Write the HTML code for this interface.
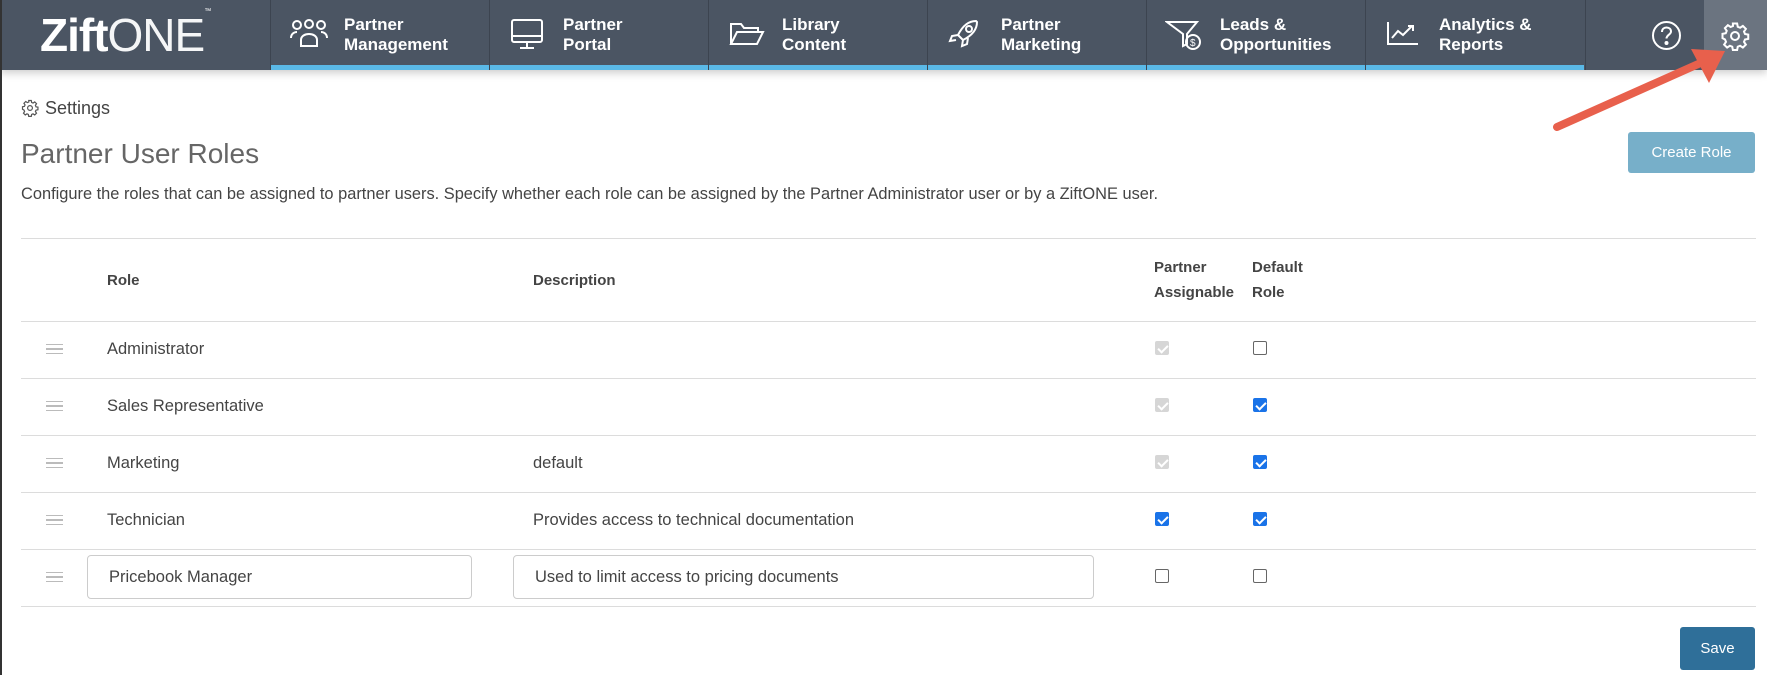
<!DOCTYPE html>
<html><head><meta charset="utf-8"><style>
*{box-sizing:border-box;margin:0;padding:0}
body{width:1767px;height:675px;overflow:hidden;background:#fff;font-family:"Liberation Sans",sans-serif;color:#444;position:relative}
.left{position:absolute;left:0;top:0;width:2px;height:675px;background:#333}
.nav{position:absolute;left:0;top:0;width:1767px;height:70px;background:#4b5563;box-shadow:0 3px 8px rgba(0,0,0,.2)}
.logo{position:absolute;left:40px;top:8px;color:#fff;font-size:46px;letter-spacing:-1px}
.logo b{font-weight:bold}.logo span{font-weight:normal;font-family:"Liberation Sans Narrow","Liberation Sans",sans-serif;opacity:.95}
.item{position:absolute;top:0;height:70px;width:219px;border-left:1px solid #3c4450;color:#fff}
.item .bar{position:absolute;left:0;right:0;bottom:0;height:5px;background:#5ab8e6}
.item .t{position:absolute;left:73px;top:15px;font-size:17px;font-weight:bold;line-height:20px}
.item svg{position:absolute;left:18px;top:18px}
.gear{position:absolute;left:1704px;top:0;width:63px;height:70px;background:#6b7480}
.abs{position:absolute}
.hr{position:absolute;left:21px;width:1735px;height:1px;background:#dcdcdc}
.cell{position:absolute;font-size:16.5px;color:#444}
.drag{position:absolute;left:46px;width:17px;height:10px;border-top:1.5px solid #bbb;border-bottom:1.5px solid #bbb}
.drag:after{content:"";position:absolute;left:0;right:0;top:3px;height:1.5px;background:#bbb}
.cb{position:absolute;width:14px;height:14px;border:1px solid #666;border-radius:2px;background:#fff}
.cb.on{background:#1a73e8;border-color:#1a73e8}
.cb.dis{background:#d6d6d6;border-color:#d6d6d6}
.cb.on:after,.cb.dis:after{content:"";position:absolute;left:4px;top:1px;width:4px;height:8px;border:solid #fff;border-width:0 2px 2px 0;transform:rotate(45deg)}
.inp{position:absolute;height:44px;border:1px solid #ccc;border-radius:4px;font-size:16.5px;padding:12px 21px;color:#444}
.th{position:absolute;font-size:15px;font-weight:bold;color:#444;line-height:25px}
</style></head><body>
<div class="nav">
 <div class="logo"><b>Zift</b><span>ONE</span><sup style="font-size:7px;vertical-align:top">™</sup></div>
 <div class="item" style="left:270px"><svg width="40" height="32" viewBox="0 0 40 32" fill="none" stroke="#fff" stroke-width="2"><circle cx="8" cy="7" r="4"/><circle cx="20" cy="6" r="4"/><circle cx="32" cy="7" r="4"/><path d="M2 20c0-4 3-6 6-6M38 20c0-4-3-6-6-6M12 28v-6c0-4 4-6 8-6s8 2 8 6v6z"/></svg><div class="t">Partner<br>Management</div><div class="bar"></div></div>
 <div class="item" style="left:489px"><svg width="40" height="34" viewBox="0 0 40 34" fill="none" stroke="#fff" stroke-width="2"><rect x="4" y="2" width="30" height="22" rx="2"/><path d="M4 18h30M19 24v6M12 30h14"/></svg><div class="t">Partner<br>Portal</div><div class="bar"></div></div>
 <div class="item" style="left:708px"><svg width="40" height="32" viewBox="0 0 40 32" fill="none" stroke="#fff" stroke-width="2"><path d="M4 26V6h10l3 4h14v4M4 26l6-12h26l-6 12z"/></svg><div class="t">Library<br>Content</div><div class="bar"></div></div>
 <div class="item" style="left:927px"><svg width="40" height="34" viewBox="0 0 40 34" fill="none" stroke="#fff" stroke-width="2"><path d="M30 3c-8 0-14 6-18 14l5 5c8-4 14-10 14-18zM12 17l-6 1 -2 5 6-1M17 22l-1 6 5-2 1-6"/><circle cx="23" cy="11" r="3"/></svg><div class="t">Partner<br>Marketing</div><div class="bar"></div></div>
 <div class="item" style="left:1146px"><svg width="40" height="34" viewBox="0 0 40 34" fill="none" stroke="#fff" stroke-width="2"><path d="M2 4h30l-10 12v10l-4 2V16z"/><circle cx="28" cy="24" r="7"/><text x="25" y="28" font-size="10" fill="#fff" stroke="none" font-family="Liberation Sans">$</text></svg><div class="t">Leads &amp;<br>Opportunities</div><div class="bar"></div></div>
 <div class="item" style="left:1365px"><svg width="40" height="32" viewBox="0 0 40 32" fill="none" stroke="#fff" stroke-width="2"><path d="M4 4v22h30M8 20l6-7 5 4 9-9M24 8h5v5"/></svg><div class="t">Analytics &amp;<br>Reports</div><div class="bar"></div></div>
 <div class="item" style="left:1585px;width:119px"></div>
 <svg class="abs" style="left:1651px;top:20px" width="31" height="31" viewBox="0 0 31 31" fill="none" stroke="#fff" stroke-width="2"><circle cx="15.5" cy="15.5" r="13.5"/><path d="M11 12c0-3 2-4.5 4.5-4.5S20 9 20 11.5c0 3-4.5 3.5-4.5 7"/><circle cx="15.5" cy="23" r="1" fill="#fff"/></svg>
 <div class="gear"><svg class="abs" style="left:16px;top:21px" width="30" height="30" viewBox="0 0 24 24" fill="none" stroke="#fff" stroke-width="1.6"><circle cx="12" cy="12" r="3.2"/><path d="M10.3 2h3.4l.5 2.6 1.9.8 2.2-1.5 2.4 2.4-1.5 2.2.8 1.9 2.6.5v3.4l-2.6.5-.8 1.9 1.5 2.2-2.4 2.4-2.2-1.5-1.9.8-.5 2.6h-3.4l-.5-2.6-1.9-.8-2.2 1.5-2.4-2.4 1.5-2.2-.8-1.9L2 13.7v-3.4l2.6-.5.8-1.9-1.5-2.2 2.4-2.4 2.2 1.5 1.9-.8z"/></svg></div>
</div>
<div class="left"></div>
<svg class="abs" style="left:1545px;top:45px" width="190" height="95" viewBox="0 0 190 95"><line x1="12" y1="82" x2="160" y2="16" stroke="#e8604c" stroke-width="8" stroke-linecap="round"/><polygon points="180,6 146,4 164,38" fill="#e8604c"/></svg>

<svg class="abs" style="left:21px;top:99px" width="18" height="18" viewBox="0 0 24 24" fill="none" stroke="#555" stroke-width="1.6"><circle cx="12" cy="12" r="3.2"/><path d="M10.3 2h3.4l.5 2.6 1.9.8 2.2-1.5 2.4 2.4-1.5 2.2.8 1.9 2.6.5v3.4l-2.6.5-.8 1.9 1.5 2.2-2.4 2.4-2.2-1.5-1.9.8-.5 2.6h-3.4l-.5-2.6-1.9-.8-2.2 1.5-2.4-2.4 1.5-2.2-.8-1.9L2 13.7v-3.4l2.6-.5.8-1.9-1.5-2.2 2.4-2.4 2.2 1.5 1.9-.8z"/></svg>
<div class="abs" style="left:45px;top:98px;font-size:18px;color:#444">Settings</div>
<div class="abs" style="left:21px;top:138px;font-size:28px;color:#666">Partner User Roles</div>
<div class="abs" style="left:1628px;top:132px;width:127px;height:41px;background:#77afc9;border-radius:3px;color:#fff;font-size:15px;text-align:center;line-height:41px">Create Role</div>
<div class="abs" style="left:21px;top:185px;font-size:16.4px;color:#444;white-space:nowrap">Configure the roles that can be assigned to partner users. Specify whether each role can be assigned by the Partner Administrator user or by a ZiftONE user.</div>

<div class="hr" style="top:238px"></div>
<div class="th" style="left:107px;top:268px">Role</div>
<div class="th" style="left:533px;top:268px">Description</div>
<div class="th" style="left:1154px;top:255px">Partner<br>Assignable</div>
<div class="th" style="left:1252px;top:255px">Default<br>Role</div>
<div class="hr" style="top:321px"></div>

<div class="drag" style="top:344px"></div><div class="cell" style="left:107px;top:340px">Administrator</div>
<div class="cb dis" style="left:1155px;top:341px"></div><div class="cb" style="left:1253px;top:341px"></div>
<div class="hr" style="top:378px"></div>

<div class="drag" style="top:401px"></div><div class="cell" style="left:107px;top:397px">Sales Representative</div>
<div class="cb dis" style="left:1155px;top:398px"></div><div class="cb on" style="left:1253px;top:398px"></div>
<div class="hr" style="top:435px"></div>

<div class="drag" style="top:458px"></div><div class="cell" style="left:107px;top:454px">Marketing</div><div class="cell" style="left:533px;top:454px">default</div>
<div class="cb dis" style="left:1155px;top:455px"></div><div class="cb on" style="left:1253px;top:455px"></div>
<div class="hr" style="top:492px"></div>

<div class="drag" style="top:515px"></div><div class="cell" style="left:107px;top:511px">Technician</div><div class="cell" style="left:533px;top:511px">Provides access to technical documentation</div>
<div class="cb on" style="left:1155px;top:512px"></div><div class="cb on" style="left:1253px;top:512px"></div>
<div class="hr" style="top:549px"></div>

<div class="drag" style="top:572px"></div>
<div class="inp" style="left:87px;top:555px;width:385px">Pricebook Manager</div>
<div class="inp" style="left:513px;top:555px;width:581px">Used to limit access to pricing documents</div>
<div class="cb" style="left:1155px;top:569px"></div><div class="cb" style="left:1253px;top:569px"></div>
<div class="hr" style="top:606px"></div>

<div class="abs" style="left:1680px;top:627px;width:75px;height:43px;background:#2f6f99;border-radius:3px;color:#fff;font-size:15px;text-align:center;line-height:43px">Save</div>
</body></html>
